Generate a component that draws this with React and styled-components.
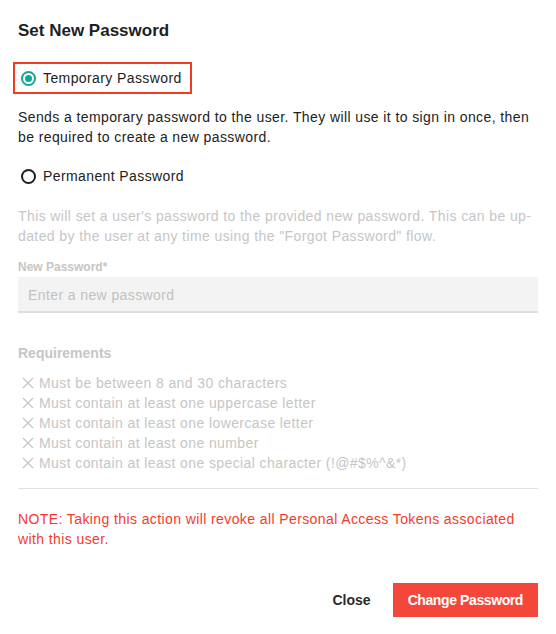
import React from "react";
import styled, { createGlobalStyle } from "styled-components";

const GlobalStyle = createGlobalStyle`
  html, body {
    margin: 0;
    padding: 0;
    background: #ffffff;
    font-family: "Liberation Sans", Arial, sans-serif;
    color: #222222;
  }
  * { box-sizing: border-box; }
`;

const requirements = [
  "Must be between 8 and 30 characters",
  "Must contain at least one uppercase letter",
  "Must contain at least one lowercase letter",
  "Must contain at least one number",
  "Must contain at least one special character (!@#$%^&*)",
];

const CrossIcon = () => (
  <svg width="12" height="12" viewBox="0 0 12 12">
    <path d="M1 1 L11 11 M11 1 L1 11" stroke="currentColor" strokeWidth="1.3" fill="none" />
  </svg>
);

const App = () => {
  return (
    <>
      <GlobalStyle />
      <Modal>
        <Title>Set New Password</Title>

        <Highlight>
          <RadioRow>
            <Radio checked />
            <RadioLabel>Temporary Password</RadioLabel>
          </RadioRow>
        </Highlight>
        <Description>
          Sends a temporary password to the user. They will use it to sign in once, then be required to
          create a new password.
        </Description>

        <PlainRadio>
          <RadioRow>
            <Radio />
            <RadioLabel>Permanent Password</RadioLabel>
          </RadioRow>
        </PlainRadio>
        <Description disabled>
          This will set a user's password to the provided new password. This can be up{"\u00AD"}dated by the
          user at any time using the "Forgot Password" flow.
        </Description>

        <FieldLabel>New Password*</FieldLabel>
        <Input disabled placeholder="Enter a new password" />

        <SectionLabel>Requirements</SectionLabel>
        <ReqList>
          {requirements.map((r) => (
            <ReqItem key={r}>
              <CrossIcon />
              <span>{r}</span>
            </ReqItem>
          ))}
        </ReqList>

        <Divider />

        <Note>NOTE: Taking this action will revoke all Personal Access Tokens associated with this user.</Note>

        <Footer>
          <TextButton>Close</TextButton>
          <PrimaryButton>Change Password</PrimaryButton>
        </Footer>
      </Modal>
    </>
  );
};

export default App;

const Modal = styled.div`
  width: 556px;
  height: 634px;
  padding: 20px 18px 0 18px;
  display: flex;
  flex-direction: column;
`;

const Title = styled.h2`
  margin: 0;
  font-size: 17px;
  font-weight: 700;
  line-height: 22px;
  color: #1f1f1f;
`;

const Highlight = styled.div`
  align-self: flex-start;
  margin: 20px 0 0 -5px;
  padding: 5px 8px 5px 3px;
  border: 2px solid #f03a22;
`;

const PlainRadio = styled.div`
  margin-top: 20px;
`;

const RadioRow = styled.label`
  display: flex;
  align-items: center;
  gap: 7px;
  height: 18px;
`;

const Radio = styled.span`
  width: 15px;
  height: 15px;
  border-radius: 50%;
  border: 2px solid ${({ checked }) => (checked ? "#14a59a" : "#1f1f1f")};
  display: flex;
  align-items: center;
  justify-content: center;
  margin-left: 3px;
  &::after {
    content: "";
    display: ${({ checked }) => (checked ? "block" : "none")};
    width: 7px;
    height: 7px;
    border-radius: 50%;
    background: #14a59a;
  }
`;

const RadioLabel = styled.span`
  font-size: 14px;
  letter-spacing: 0.4px;
  color: #222222;
`;

const Description = styled.p`
  margin: ${({ disabled }) => (disabled ? "21px" : "13px")} 0 0 0;
  font-size: 14px;
  line-height: 20px;
  letter-spacing: 0.4px;
  hyphens: manual;
  color: ${({ disabled }) => (disabled ? "#c6c6c6" : "#222222")};
`;

const FieldLabel = styled.div`
  margin-top: 14px;
  font-size: 12px;
  font-weight: 700;
  color: #c6c6c6;
`;

const Input = styled.input`
  margin-top: 3px;
  height: 36px;
  width: 100%;
  border: none;
  border-bottom: 2px solid #dedede;
  background: #f3f3f3;
  padding: 2px 10px 0 10px;
  font-family: inherit;
  font-size: 14px;
  letter-spacing: 0.4px;
  outline: none;
  &::placeholder {
    color: #c2c2c2;
  }
`;

const SectionLabel = styled.div`
  margin-top: 32px;
  font-size: 14px;
  font-weight: 700;
  color: #c6c6c6;
`;

const ReqList = styled.ul`
  list-style: none;
  margin: 12px 0 0 0;
  padding: 0 0 0 4px;
`;

const ReqItem = styled.li`
  display: flex;
  align-items: center;
  gap: 5px;
  font-size: 14px;
  line-height: 20px;
  letter-spacing: 0.4px;
  color: #c6c6c6;
`;

const Divider = styled.hr`
  margin: 15px 0 0 0;
  border: none;
  border-top: 1px solid #e2e2e2;
`;

const Note = styled.p`
  margin: 20px 0 0 0;
  font-size: 14px;
  line-height: 20px;
  letter-spacing: 0.4px;
  color: #f33b2d;
`;

const Footer = styled.div`
  margin-top: 34px;
  display: flex;
  justify-content: flex-end;
  align-items: center;
  gap: 22px;
`;

const TextButton = styled.button`
  background: none;
  border: none;
  padding: 0;
  font-family: inherit;
  font-size: 14px;
  font-weight: 700;
  color: #2a2a2a;
`;

const PrimaryButton = styled.button`
  background: #f2473a;
  color: #ffffff;
  border: none;
  height: 34px;
  padding: 0 15px;
  font-family: inherit;
  font-size: 14px;
  font-weight: 700;
  letter-spacing: -0.4px;
`;
